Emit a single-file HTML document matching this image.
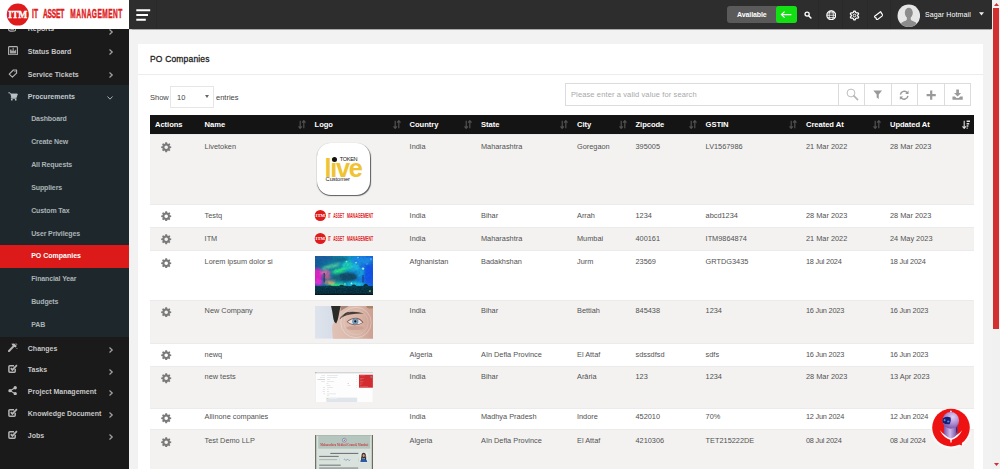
<!DOCTYPE html>
<html lang="en">
<head>
<meta charset="utf-8">
<title>PO Companies - IT Asset Management</title>
<style>
*{box-sizing:border-box;margin:0;padding:0}
html,body{width:1000px;height:469px;overflow:hidden}
body{position:relative;background:#f2f2f2;font-family:"Liberation Sans",sans-serif;font-size:7px;color:#444;line-height:1}
.abs{position:absolute}
/* header */
#logo{left:0;top:0;width:129px;height:29px;background:#fff;z-index:5}
#topbar{left:129px;top:0;width:863px;height:29.3px;background:#2d2d2d;z-index:4;box-shadow:0 0.6px 1px rgba(0,0,0,.3)}
/* sidebar */
#sidebar{left:0;top:29px;width:129px;height:440px;background:#1a1a1a;overflow:hidden}
#sidebar .grp{position:absolute;left:0;top:56px;width:129px;height:252px;background:#1e282c}
#sidebar .active{position:absolute;left:0;top:216px;width:129px;height:23px;background:#dc1a1a}
.mi{position:absolute;left:27.8px;color:#c6c6c6;font-size:7px;font-weight:bold;white-space:nowrap}
.si{position:absolute;left:31.2px;color:#aab3b7;font-size:7px;letter-spacing:-0.12px;margin-top:0.7px;white-space:nowrap;font-weight:bold}
.chev{position:absolute;left:108px;width:6px;height:8px;margin-top:0.1px}
.ico{position:absolute;left:7.9px}
.vsep{position:absolute;top:0;width:1px;height:29px;background:#292929}
#scroll{left:992px;top:0;width:8px;height:469px;background:#f1f1f1;z-index:6}
#scroll .thumb{position:absolute;left:1.4px;top:8.2px;width:5.3px;height:320.6px;background:#d32f2f}
/* card */
#card{left:138px;top:44px;width:845px;height:430px;background:#fff}
#title{left:150px;top:55.3px;font-size:8.5px;color:#222;font-weight:normal;letter-spacing:0.17px;-webkit-text-stroke:0.28px #222}
#divider{left:138px;top:74px;width:845px;height:1px;background:#ececec}
#sel{left:170px;top:86px;width:44px;height:22px;border:1px solid #e6e6e6;background:#fff}
#search{left:565px;top:83px;width:406px;height:23px;border:1px solid #dcdcdc;background:#fff}
#search .sep{position:absolute;top:0;width:1px;height:21px;background:#dcdcdc}
.lbl{font-size:7.5px;color:#444;white-space:nowrap}
/* table */
#thead{left:150px;top:115px;width:823.5px;height:19.5px;background:#141414}
.th{position:absolute;top:121.2px;color:#fff;font-weight:bold;font-size:7.6px;white-space:nowrap;letter-spacing:-0.05px}
.sort{position:absolute;top:120px;width:8px;height:9px}
.row{position:absolute;left:150px;width:823.5px;box-shadow:inset 0 1px 0 #ebebeb}
.row.g{background:#f3f2f1}
.row.w{background:#fff}
.row span{position:absolute;top:7.8px;white-space:nowrap;color:#525252;font-size:7.35px}
.row .gear{position:absolute;left:11.2px;top:6.1px;width:10.4px;height:10.4px}
</style>
</head>
<body>
<div id="sidebar" class="abs">
  <div class="grp"></div>
  <div class="active"></div>
  <!-- coordinates inside sidebar are relative to top:29 -->
  <svg class="ico" style="top:-3px;left:7.6px" width="8.4" height="6" viewBox="0 0 8.4 6"><path d="M0.6 0 V3.4 Q0.6 5.2 4.2 5.2 Q7.8 5.2 7.8 3.4 V0" fill="none" stroke="#b0b0b0" stroke-width="1.2"/><path d="M2.4 3.2 H6" stroke="#b0b0b0" stroke-width="1.2"/></svg>
  <div class="mi" style="top:-4px">Reports</div>
  <svg class="chev" style="top:-1px" viewBox="0 0 6 8"><path d="M1.5 1.5 L4.2 4 L1.5 6.5" fill="none" stroke="#a2a2a2" stroke-width="1.25"/></svg>

  <svg class="ico" style="top:16.6px;left:7.6px" width="10" height="9.4" viewBox="0 0 10 9.4"><rect x="0.6" y="0.6" width="8.8" height="8.2" rx="0.9" fill="none" stroke="#b4b4b4" stroke-width="1.1"/><path d="M1.9 7.6 V3.6 H3.5 V4.8 H4.6 V1.8 H5.7 V4.8 H7.2 V3.8 H8.1 V7.6 Z" fill="#a4a4a4"/></svg>
  <div class="mi" style="top:18.5px">Status Board</div>
  <svg class="chev" style="top:19px" viewBox="0 0 6 8"><path d="M1.5 1.5 L4.2 4 L1.5 6.5" fill="none" stroke="#a2a2a2" stroke-width="1.25"/></svg>

  <svg class="ico" style="top:40px" width="10" height="9" viewBox="0 0 10 9"><path d="M1.2 5.2 L5.4 1 H8.6 V4.2 L4.4 8.2 Z" fill="none" stroke="#b8b8b8" stroke-width="1.1" stroke-linejoin="round"/><circle cx="7" cy="2.6" r="0.6" fill="#b8b8b8"/></svg>
  <div class="mi" style="top:41.5px">Service Tickets</div>
  <svg class="chev" style="top:42px" viewBox="0 0 6 8"><path d="M1.5 1.5 L4.2 4 L1.5 6.5" fill="none" stroke="#a2a2a2" stroke-width="1.25"/></svg>

  <svg class="ico" style="top:63px;left:8px" width="10" height="9" viewBox="0 0 10 9"><path d="M0.3 0.8 H2 L2.5 2 H9.3 L8.3 5.4 H3.2 L3.5 6.3 H8.4" fill="none" stroke="#b9c1c5" stroke-width="0.9"/><path d="M2.5 2 H9.3 L8.3 5.4 H3.3 Z" fill="#b9c1c5"/><circle cx="3.8" cy="7.7" r="0.9" fill="#b9c1c5"/><circle cx="7.7" cy="7.7" r="0.9" fill="#b9c1c5"/></svg>
  <div class="mi" style="top:63.5px;color:#c3cace">Procurements</div>
  <svg class="chev" style="top:66px;left:105.8px;width:8px;height:6px" viewBox="0 0 8 6"><path d="M1.5 1.5 L4 4.2 L6.5 1.5" fill="none" stroke="#aab2b6" stroke-width="1"/></svg>

  <div class="si" style="top:85.5px">Dashboard</div>
  <div class="si" style="top:108.5px">Create New</div>
  <div class="si" style="top:131.5px">All Requests</div>
  <div class="si" style="top:154.5px">Suppliers</div>
  <div class="si" style="top:177px">Custom Tax</div>
  <div class="si" style="top:200px">User Privileges</div>
  <div class="si" style="top:222.5px;color:#fff;letter-spacing:0px">PO Companies</div>
  <div class="si" style="top:245.5px">Financial Year</div>
  <div class="si" style="top:268.5px">Budgets</div>
  <div class="si" style="top:291.5px">PAB</div>

  <svg class="ico" style="top:313.6px" width="10" height="9" viewBox="0 0 10 9"><path d="M1 8 L5.2 3.6" stroke="#b4b4b4" stroke-width="2.1" stroke-linecap="round"/><path d="M3.4 0.8 L6.2 0.6 L8.8 3 L7.6 4.6 L5.2 3.6 Z" fill="#bcbcbc"/><path d="M7.5 0.8 L9.2 1.4 M8.6 5 l0.6 0.9" stroke="#bcbcbc" stroke-width="0.8"/></svg>
  <div class="mi" style="top:315.5px">Changes</div>
  <svg class="chev" style="top:317px" viewBox="0 0 6 8"><path d="M1.5 1.5 L4.2 4 L1.5 6.5" fill="none" stroke="#a2a2a2" stroke-width="1.25"/></svg>

  <svg class="ico" style="top:335px" width="10" height="9" viewBox="0 0 10 9"><path d="M7.2 4.8 V7.3 Q7.2 8.2 6.3 8.2 H1.8 Q0.9 8.2 0.9 7.3 V2.6 Q0.9 1.7 1.8 1.7 H6" fill="none" stroke="#b4b4b4" stroke-width="1.5"/><path d="M2.8 4.2 L4.4 5.9 L8.9 1.2" fill="none" stroke="#b4b4b4" stroke-width="1.7"/></svg>
  <div class="mi" style="top:337px">Tasks</div>
  <svg class="chev" style="top:339px" viewBox="0 0 6 8"><path d="M1.5 1.5 L4.2 4 L1.5 6.5" fill="none" stroke="#a2a2a2" stroke-width="1.25"/></svg>

  <svg class="ico" style="top:356.8px" width="9.4" height="9.4" viewBox="0 0 9 9"><path d="M6.8 1.7 L2 4.5 L6.8 7.3" fill="none" stroke="#bcbcbc" stroke-width="1"/><circle cx="6.9" cy="1.7" r="1.6" fill="#bcbcbc"/><circle cx="1.9" cy="4.5" r="1.6" fill="#bcbcbc"/><circle cx="6.9" cy="7.3" r="1.6" fill="#bcbcbc"/></svg>
  <div class="mi" style="top:358.5px">Project Management</div>
  <svg class="chev" style="top:360px" viewBox="0 0 6 8"><path d="M1.5 1.5 L4.2 4 L1.5 6.5" fill="none" stroke="#a2a2a2" stroke-width="1.25"/></svg>

  <svg class="ico" style="top:378.6px" width="10" height="9" viewBox="0 0 10 9"><path d="M7.2 4.8 V7.3 Q7.2 8.2 6.3 8.2 H1.8 Q0.9 8.2 0.9 7.3 V2.6 Q0.9 1.7 1.8 1.7 H6" fill="none" stroke="#b4b4b4" stroke-width="1.5"/><path d="M2.8 4.2 L4.4 5.9 L8.9 1.2" fill="none" stroke="#b4b4b4" stroke-width="1.7"/></svg>
  <div class="mi" style="top:380.5px">Knowledge Document</div>
  <svg class="chev" style="top:382px" viewBox="0 0 6 8"><path d="M1.5 1.5 L4.2 4 L1.5 6.5" fill="none" stroke="#a2a2a2" stroke-width="1.25"/></svg>

  <svg class="ico" style="top:400.6px" width="10" height="9" viewBox="0 0 10 9"><path d="M7.2 4.8 V7.3 Q7.2 8.2 6.3 8.2 H1.8 Q0.9 8.2 0.9 7.3 V2.6 Q0.9 1.7 1.8 1.7 H6" fill="none" stroke="#b4b4b4" stroke-width="1.5"/><path d="M2.8 4.2 L4.4 5.9 L8.9 1.2" fill="none" stroke="#b4b4b4" stroke-width="1.7"/></svg>
  <div class="mi" style="top:402.5px">Jobs</div>
  <svg class="chev" style="top:404px" viewBox="0 0 6 8"><path d="M1.5 1.5 L4.2 4 L1.5 6.5" fill="none" stroke="#a2a2a2" stroke-width="1.25"/></svg>
</div>
<div id="logo" class="abs">
  <svg width="129" height="29" viewBox="0 0 129 29" style="position:absolute;left:0;top:0">
    <circle cx="17.8" cy="14.6" r="11" fill="#e01b1b"/>
    <text x="17.8" y="18" text-anchor="middle" font-family="'Liberation Serif',serif" font-weight="bold" font-size="9.5" fill="#fff" stroke="#fff" stroke-width="0.35" textLength="19" lengthAdjust="spacingAndGlyphs">ITM</text>
    <g font-family="'Liberation Sans',sans-serif" font-size="11.8" font-weight="bold" fill="#e01b1b" stroke="#e01b1b" stroke-width="0.45"><text transform="translate(32.0 18.35) scale(0.56 1.06)" textLength="10.7" lengthAdjust="spacing">IT</text><text transform="translate(43.0 18.35) scale(0.56 1.06)" textLength="38.2" lengthAdjust="spacing">ASSET</text><text transform="translate(70.3 18.35) scale(0.56 1.06)" textLength="92.7" lengthAdjust="spacing">MANAGEMENT</text></g>
  </svg>
</div>
<div id="topbar" class="abs">
  <!-- coordinates relative to left:129 -->
  <svg style="position:absolute;left:7px;top:8px" width="15" height="13" viewBox="0 0 15 13"><path d="M0.3 2.2 H14.2 M0.3 7 H12 M0.3 11.7 H9.8" stroke="#fff" stroke-width="2" fill="none"/></svg>
  <div class="vsep" style="left:27px"></div>
  <div class="vsep" style="left:689px"></div>
  <div class="vsep" style="left:713px"></div>
  <div class="vsep" style="left:738px"></div>
  <div class="vsep" style="left:761px"></div>
  <div class="abs" style="left:598px;top:6px;width:70px;height:17px;background:#5a5a5a;border-radius:3px"></div>
  <div class="abs" style="left:647px;top:6px;width:21px;height:17px;background:#12e012;border-radius:3px"></div>
  <div class="abs" style="left:608px;top:11px;color:#fff;font-size:7px;font-weight:bold;letter-spacing:-0.1px">Available</div>
  <svg style="position:absolute;left:651px;top:10px" width="13" height="9" viewBox="0 0 13 9"><path d="M11.4 4.6 H1.6 M4.6 1.6 L1.4 4.6 L4.6 7.6" stroke="#fff" stroke-width="1.15" fill="none"/></svg>
  <!-- search -->
  <svg style="position:absolute;left:675px;top:11.2px" width="7.8" height="7.8" viewBox="0 0 9 9"><circle cx="3.6" cy="3.6" r="2.4" fill="none" stroke="#fff" stroke-width="1.5"/><path d="M5.4 5.4 L8 8" stroke="#fff" stroke-width="1.7" stroke-linecap="round"/></svg>
  <!-- globe -->
  <svg style="position:absolute;left:696.6px;top:9.8px" width="10.5" height="10.5" viewBox="0 0 11 11"><circle cx="5.5" cy="5.5" r="4.6" fill="none" stroke="#fff" stroke-width="1.3"/><ellipse cx="5.5" cy="5.5" rx="2.2" ry="4.6" fill="none" stroke="#fff" stroke-width="0.85"/><path d="M1 5.5 H10 M1.6 3 H9.4 M1.6 8 H9.4" stroke="#fff" stroke-width="0.85" fill="none"/></svg>
  <!-- gear -->
  <svg style="position:absolute;left:720.2px;top:9.5px" width="11" height="11" viewBox="0 0 11 11"><path d="M4.91 1.04 L6.09 1.04 L6.72 2.54 L7.45 2.96 L9.07 2.76 L9.66 3.78 L8.67 5.08 L8.67 5.92 L9.66 7.22 L9.07 8.24 L7.45 8.04 L6.72 8.46 L6.09 9.96 L4.91 9.96 L4.28 8.46 L3.55 8.04 L1.93 8.24 L1.34 7.22 L2.33 5.92 L2.33 5.08 L1.34 3.78 L1.93 2.76 L3.55 2.96 L4.28 2.54 Z" fill="none" stroke="#fff" stroke-width="1.25" stroke-linejoin="round"/><circle cx="5.5" cy="5.5" r="1.35" fill="none" stroke="#fff" stroke-width="0.95"/></svg>
  <!-- ticket -->
  <svg style="position:absolute;left:744.7px;top:10.5px" width="9.6" height="9.6" viewBox="0 0 11 11"><g transform="rotate(-38 5.5 5.5)"><path d="M1 3 H10 V4.6 Q8.9 5.5 10 6.4 V8 H1 V6.4 Q2.1 5.5 1 4.6 Z" fill="none" stroke="#fff" stroke-width="1.35" stroke-linejoin="round"/></g></svg>
  <!-- avatar -->
  <svg style="position:absolute;left:767.8px;top:4.4px" width="23.6" height="23.6" viewBox="0 0 23 23"><defs><clipPath id="avc"><circle cx="11.5" cy="11.5" r="11"/></clipPath></defs><circle cx="11.5" cy="11.5" r="11" fill="#e6e6e6"/><g clip-path="url(#avc)" fill="#8c8c8c"><ellipse cx="11.5" cy="8.6" rx="3.9" ry="4.9"/><path d="M9.6 12 H13.4 V15 Q13.6 16 16 16.8 Q19 17.8 19.4 20 L19.6 24 H3.4 L3.6 20 Q4 17.8 7 16.8 Q9.4 16 9.6 15 Z"/></g></svg>
  <div class="abs" style="left:796px;top:11px;color:#fff;font-size:7px;letter-spacing:0.12px">Sagar Hotmail</div>
  <svg style="position:absolute;left:850px;top:12px" width="5" height="4" viewBox="0 0 5 4"><path d="M0 0.3 H5 L2.5 3.6 Z" fill="#eee"/></svg>
</div>
<div id="scroll" class="abs">
  <div class="thumb"></div>
  <svg style="position:absolute;left:1.5px;top:3px" width="5" height="3" viewBox="0 0 5 3"><path d="M0 3 L2.5 0 L5 3 Z" fill="#d32f2f"/></svg>
  <svg style="position:absolute;left:1.5px;top:463px" width="5" height="3" viewBox="0 0 5 3"><path d="M0 0 L2.5 3 L5 0 Z" fill="#d32f2f"/></svg>
</div>
<div id="card" class="abs"></div>
<div id="title" class="abs">PO Companies</div>
<div id="divider" class="abs"></div>
<div class="abs lbl" style="left:150px;top:93.5px">Show</div>
<div id="sel" class="abs"><span style="position:absolute;left:6px;top:6.5px;font-size:7.5px;color:#444">10</span><svg style="position:absolute;left:33.6px;top:7.6px" width="4" height="3" viewBox="0 0 4 3"><path d="M0 0 H4 L2 3 Z" fill="#666"/></svg></div>
<div class="abs lbl" style="left:216px;top:93.5px">entries</div>
<div id="search" class="abs">
  <span style="position:absolute;left:5px;top:7.3px;font-size:7.5px;color:#a9a9a9;white-space:nowrap;letter-spacing:0.12px">Please enter a valid value for search</span>
  <div class="sep" style="left:271.8px"></div><div class="sep" style="left:298.2px"></div><div class="sep" style="left:324.9px"></div><div class="sep" style="left:351.4px"></div><div class="sep" style="left:377.6px"></div>
  <svg style="position:absolute;left:280px;top:4px" width="13" height="13" viewBox="0 0 13 13"><circle cx="5" cy="5" r="3.9" fill="none" stroke="#b5b5b5" stroke-width="0.9"/><path d="M7.9 7.9 L11.6 11.6" stroke="#b5b5b5" stroke-width="1.6" stroke-linecap="round"/></svg>
  <svg style="position:absolute;left:307.2px;top:6.3px" width="9.4" height="9.4" viewBox="0 0 9 9"><path d="M0.3 0.5 H8.7 L5.5 4.2 V8.6 L3.5 7.2 V4.2 Z" fill="#9a9a9a"/></svg>
  <svg style="position:absolute;left:333px;top:5.8px" width="10.4" height="10.4" viewBox="0 0 10 10"><path d="M1.4 4.4 A3.7 3.7 0 0 1 8 2.6 M8.6 5.6 A3.7 3.7 0 0 1 2 7.4" fill="none" stroke="#9a9a9a" stroke-width="1.4"/><path d="M9.2 0.6 V3.8 H6 Z M0.8 9.4 V6.2 H4 Z" fill="#9a9a9a"/></svg>
  <svg style="position:absolute;left:359.6px;top:5.8px" width="10.4" height="10.4" viewBox="0 0 10 10"><path d="M5 0.6 V9.4 M0.6 5 H9.4" stroke="#9a9a9a" stroke-width="2.1" fill="none"/></svg>
  <svg style="position:absolute;left:386px;top:5px" width="11.2" height="11.2" viewBox="0 0 10 10"><path d="M3.8 0.4 H6.2 V3.6 H8.2 L5 6.8 L1.8 3.6 H3.8 Z" fill="#9a9a9a"/><path d="M0.4 6.6 H2.6 L4 8 H6 L7.4 6.6 H9.6 V9.6 H0.4 Z" fill="#9a9a9a"/></svg>
</div>
<div id="thead" class="abs"></div>
<div class="th" style="left:155px">Actions</div>
<div class="th" style="left:204.6px">Name</div>
<svg class="sort" style="left:298px" viewBox="0 0 8 9"><path d="M2.2 8.3 V0.8 M0.5 6.4 L2.2 8.4 L3.9 6.4 M5.8 0.7 V8.2 M4.1 2.6 L5.8 0.6 L7.5 2.6" fill="none" stroke="#505050" stroke-width="1.2"/></svg>
<div class="th" style="left:314.6px">Logo</div>
<svg class="sort" style="left:392.5px" viewBox="0 0 8 9"><path d="M2.2 8.3 V0.8 M0.5 6.4 L2.2 8.4 L3.9 6.4 M5.8 0.7 V8.2 M4.1 2.6 L5.8 0.6 L7.5 2.6" fill="none" stroke="#505050" stroke-width="1.2"/></svg>
<div class="th" style="left:409.6px">Country</div>
<svg class="sort" style="left:464px" viewBox="0 0 8 9"><path d="M2.2 8.3 V0.8 M0.5 6.4 L2.2 8.4 L3.9 6.4 M5.8 0.7 V8.2 M4.1 2.6 L5.8 0.6 L7.5 2.6" fill="none" stroke="#505050" stroke-width="1.2"/></svg>
<div class="th" style="left:481px">State</div>
<svg class="sort" style="left:560px" viewBox="0 0 8 9"><path d="M2.2 8.3 V0.8 M0.5 6.4 L2.2 8.4 L3.9 6.4 M5.8 0.7 V8.2 M4.1 2.6 L5.8 0.6 L7.5 2.6" fill="none" stroke="#505050" stroke-width="1.2"/></svg>
<div class="th" style="left:577px">City</div>
<svg class="sort" style="left:618.5px" viewBox="0 0 8 9"><path d="M2.2 8.3 V0.8 M0.5 6.4 L2.2 8.4 L3.9 6.4 M5.8 0.7 V8.2 M4.1 2.6 L5.8 0.6 L7.5 2.6" fill="none" stroke="#505050" stroke-width="1.2"/></svg>
<div class="th" style="left:635.5px">Zipcode</div>
<svg class="sort" style="left:688.5px" viewBox="0 0 8 9"><path d="M2.2 8.3 V0.8 M0.5 6.4 L2.2 8.4 L3.9 6.4 M5.8 0.7 V8.2 M4.1 2.6 L5.8 0.6 L7.5 2.6" fill="none" stroke="#505050" stroke-width="1.2"/></svg>
<div class="th" style="left:705.6px">GSTIN</div>
<svg class="sort" style="left:789px" viewBox="0 0 8 9"><path d="M2.2 8.3 V0.8 M0.5 6.4 L2.2 8.4 L3.9 6.4 M5.8 0.7 V8.2 M4.1 2.6 L5.8 0.6 L7.5 2.6" fill="none" stroke="#505050" stroke-width="1.2"/></svg>
<div class="th" style="left:806px">Created At</div>
<svg class="sort" style="left:873px" viewBox="0 0 8 9"><path d="M2.2 8.3 V0.8 M0.5 6.4 L2.2 8.4 L3.9 6.4 M5.8 0.7 V8.2 M4.1 2.6 L5.8 0.6 L7.5 2.6" fill="none" stroke="#505050" stroke-width="1.2"/></svg>
<div class="th" style="left:890px">Updated At</div>
<svg class="sort" style="left:961.6px" viewBox="0 0 8 9"><path d="M2.2 8.3 V0.8 M0.5 6.4 L2.2 8.4 L3.9 6.4" fill="none" stroke="#ddd" stroke-width="1.1"/><path d="M4.6 0.5 H8 V2 H4.6 Z M4.6 2.9 H7.2 V4.4 H4.6 Z M4.6 5.3 H6.4 V6.8 H4.6 Z M4.6 7.6 H5.7 V8.8 H4.6 Z" fill="#ddd"/></svg>
<div class="row g" id="r1" style="top:134px;height:70px"><svg class="gear" style="top:8.3px" viewBox="0 0 11 11"><path d="M4.6 0.3 H6.4 L6.7 1.7 L7.6 2.1 L8.8 1.3 L9.9 2.5 L9.1 3.6 L9.4 4.5 L10.8 4.7 V6.4 L9.4 6.7 L9.1 7.5 L9.9 8.6 L8.7 9.8 L7.6 9 L6.7 9.4 L6.4 10.8 H4.6 L4.3 9.4 L3.4 9 L2.3 9.8 L1.1 8.6 L1.9 7.5 L1.6 6.7 L0.2 6.4 V4.7 L1.6 4.5 L1.9 3.6 L1.1 2.5 L2.3 1.3 L3.4 2.1 L4.3 1.7 Z M5.5 3.6 A1.9 1.9 0 1 0 5.5 7.4 A1.9 1.9 0 1 0 5.5 3.6 Z" fill="#7a7a7a" fill-rule="evenodd"/></svg><span style="top:9.4px;left:54.6px">Livetoken</span><span style="top:9.4px;left:259.6px">India</span><span style="top:9.4px;left:331.0px">Maharashtra</span><span style="top:9.4px;left:427.0px">Goregaon</span><span style="top:9.4px;left:485.5px">395005</span><span style="top:9.4px;left:555.6px">LV1567986</span><span style="top:9.4px;left:656.0px">21 Mar 2022</span><span style="top:9.4px;left:740.0px">28 Mar 2023</span></div>
<div class="row w" id="r2" style="top:204px;height:23px"><svg class="gear" style="top:6.9px" viewBox="0 0 11 11"><path d="M4.6 0.3 H6.4 L6.7 1.7 L7.6 2.1 L8.8 1.3 L9.9 2.5 L9.1 3.6 L9.4 4.5 L10.8 4.7 V6.4 L9.4 6.7 L9.1 7.5 L9.9 8.6 L8.7 9.8 L7.6 9 L6.7 9.4 L6.4 10.8 H4.6 L4.3 9.4 L3.4 9 L2.3 9.8 L1.1 8.6 L1.9 7.5 L1.6 6.7 L0.2 6.4 V4.7 L1.6 4.5 L1.9 3.6 L1.1 2.5 L2.3 1.3 L3.4 2.1 L4.3 1.7 Z M5.5 3.6 A1.9 1.9 0 1 0 5.5 7.4 A1.9 1.9 0 1 0 5.5 3.6 Z" fill="#7a7a7a" fill-rule="evenodd"/></svg><span style="top:8.2px;left:54.6px">Testq</span><span style="top:8.2px;left:259.6px">India</span><span style="top:8.2px;left:331.0px">Bihar</span><span style="top:8.2px;left:427.0px">Arrah</span><span style="top:8.2px;left:485.5px">1234</span><span style="top:8.2px;left:555.6px">abcd1234</span><span style="top:8.2px;left:656.0px">28 Mar 2023</span><span style="top:8.2px;left:740.0px">28 Mar 2023</span></div>
<div class="row g" id="r3" style="top:227px;height:23px"><svg class="gear" style="top:7.2px" viewBox="0 0 11 11"><path d="M4.6 0.3 H6.4 L6.7 1.7 L7.6 2.1 L8.8 1.3 L9.9 2.5 L9.1 3.6 L9.4 4.5 L10.8 4.7 V6.4 L9.4 6.7 L9.1 7.5 L9.9 8.6 L8.7 9.8 L7.6 9 L6.7 9.4 L6.4 10.8 H4.6 L4.3 9.4 L3.4 9 L2.3 9.8 L1.1 8.6 L1.9 7.5 L1.6 6.7 L0.2 6.4 V4.7 L1.6 4.5 L1.9 3.6 L1.1 2.5 L2.3 1.3 L3.4 2.1 L4.3 1.7 Z M5.5 3.6 A1.9 1.9 0 1 0 5.5 7.4 A1.9 1.9 0 1 0 5.5 3.6 Z" fill="#7a7a7a" fill-rule="evenodd"/></svg><span style="top:8.0px;left:54.6px">ITM</span><span style="top:8.0px;left:259.6px">India</span><span style="top:8.0px;left:331.0px">Maharashtra</span><span style="top:8.0px;left:427.0px">Mumbai</span><span style="top:8.0px;left:485.5px">400161</span><span style="top:8.0px;left:555.6px">ITM9864874</span><span style="top:8.0px;left:656.0px">21 Mar 2022</span><span style="top:8.0px;left:740.0px">24 May 2023</span></div>
<div class="row w" id="r4" style="top:250px;height:50px"><svg class="gear" style="top:7.6px" viewBox="0 0 11 11"><path d="M4.6 0.3 H6.4 L6.7 1.7 L7.6 2.1 L8.8 1.3 L9.9 2.5 L9.1 3.6 L9.4 4.5 L10.8 4.7 V6.4 L9.4 6.7 L9.1 7.5 L9.9 8.6 L8.7 9.8 L7.6 9 L6.7 9.4 L6.4 10.8 H4.6 L4.3 9.4 L3.4 9 L2.3 9.8 L1.1 8.6 L1.9 7.5 L1.6 6.7 L0.2 6.4 V4.7 L1.6 4.5 L1.9 3.6 L1.1 2.5 L2.3 1.3 L3.4 2.1 L4.3 1.7 Z M5.5 3.6 A1.9 1.9 0 1 0 5.5 7.4 A1.9 1.9 0 1 0 5.5 3.6 Z" fill="#7a7a7a" fill-rule="evenodd"/></svg><span style="top:8.0px;left:54.6px">Lorem ipsum dolor si</span><span style="top:8.0px;left:259.6px">Afghanistan</span><span style="top:8.0px;left:331.0px">Badakhshan</span><span style="top:8.0px;left:427.0px">Jurm</span><span style="top:8.0px;left:485.5px">23569</span><span style="top:8.0px;left:555.6px">GRTDG3435</span><span style="top:8.0px;left:656.0px;letter-spacing:-0.22px">18 Jul 2024</span><span style="top:8.0px;left:740.0px;letter-spacing:-0.22px">18 Jul 2024</span></div>
<div class="row g" id="r5" style="top:300px;height:43px"><svg class="gear" style="top:6.8px" viewBox="0 0 11 11"><path d="M4.6 0.3 H6.4 L6.7 1.7 L7.6 2.1 L8.8 1.3 L9.9 2.5 L9.1 3.6 L9.4 4.5 L10.8 4.7 V6.4 L9.4 6.7 L9.1 7.5 L9.9 8.6 L8.7 9.8 L7.6 9 L6.7 9.4 L6.4 10.8 H4.6 L4.3 9.4 L3.4 9 L2.3 9.8 L1.1 8.6 L1.9 7.5 L1.6 6.7 L0.2 6.4 V4.7 L1.6 4.5 L1.9 3.6 L1.1 2.5 L2.3 1.3 L3.4 2.1 L4.3 1.7 Z M5.5 3.6 A1.9 1.9 0 1 0 5.5 7.4 A1.9 1.9 0 1 0 5.5 3.6 Z" fill="#7a7a7a" fill-rule="evenodd"/></svg><span style="top:7.4px;left:54.6px">New Company</span><span style="top:7.4px;left:259.6px">India</span><span style="top:7.4px;left:331.0px">Bihar</span><span style="top:7.4px;left:427.0px">Bettiah</span><span style="top:7.4px;left:485.5px">845438</span><span style="top:7.4px;left:555.6px">1234</span><span style="top:7.4px;left:656.0px;letter-spacing:-0.22px">16 Jun 2023</span><span style="top:7.4px;left:740.0px;letter-spacing:-0.22px">16 Jun 2023</span></div>
<div class="row w" id="r6" style="top:343px;height:23px"><svg class="gear" style="top:6.8px" viewBox="0 0 11 11"><path d="M4.6 0.3 H6.4 L6.7 1.7 L7.6 2.1 L8.8 1.3 L9.9 2.5 L9.1 3.6 L9.4 4.5 L10.8 4.7 V6.4 L9.4 6.7 L9.1 7.5 L9.9 8.6 L8.7 9.8 L7.6 9 L6.7 9.4 L6.4 10.8 H4.6 L4.3 9.4 L3.4 9 L2.3 9.8 L1.1 8.6 L1.9 7.5 L1.6 6.7 L0.2 6.4 V4.7 L1.6 4.5 L1.9 3.6 L1.1 2.5 L2.3 1.3 L3.4 2.1 L4.3 1.7 Z M5.5 3.6 A1.9 1.9 0 1 0 5.5 7.4 A1.9 1.9 0 1 0 5.5 3.6 Z" fill="#7a7a7a" fill-rule="evenodd"/></svg><span style="top:8.2px;left:54.6px">newq</span><span style="top:8.2px;left:259.6px">Algeria</span><span style="top:8.2px;left:331.0px">Aïn Defla Province</span><span style="top:8.2px;left:427.0px">El Attaf</span><span style="top:8.2px;left:485.5px">sdssdfsd</span><span style="top:8.2px;left:555.6px">sdfs</span><span style="top:8.2px;left:656.0px;letter-spacing:-0.22px">16 Jun 2023</span><span style="top:8.2px;left:740.0px;letter-spacing:-0.22px">16 Jun 2023</span></div>
<div class="row g" id="r7" style="top:366px;height:42px"><svg class="gear" style="top:7.3px" viewBox="0 0 11 11"><path d="M4.6 0.3 H6.4 L6.7 1.7 L7.6 2.1 L8.8 1.3 L9.9 2.5 L9.1 3.6 L9.4 4.5 L10.8 4.7 V6.4 L9.4 6.7 L9.1 7.5 L9.9 8.6 L8.7 9.8 L7.6 9 L6.7 9.4 L6.4 10.8 H4.6 L4.3 9.4 L3.4 9 L2.3 9.8 L1.1 8.6 L1.9 7.5 L1.6 6.7 L0.2 6.4 V4.7 L1.6 4.5 L1.9 3.6 L1.1 2.5 L2.3 1.3 L3.4 2.1 L4.3 1.7 Z M5.5 3.6 A1.9 1.9 0 1 0 5.5 7.4 A1.9 1.9 0 1 0 5.5 3.6 Z" fill="#7a7a7a" fill-rule="evenodd"/></svg><span style="top:7.3px;left:54.6px">new tests</span><span style="top:7.3px;left:259.6px">India</span><span style="top:7.3px;left:331.0px">Bihar</span><span style="top:7.3px;left:427.0px">Arāria</span><span style="top:7.3px;left:485.5px">123</span><span style="top:7.3px;left:555.6px">1234</span><span style="top:7.3px;left:656.0px">28 Mar 2023</span><span style="top:7.3px;left:740.0px">13 Apr 2023</span></div>
<div class="row w" id="r8" style="top:408px;height:21px"><svg class="gear" style="top:5.3px" viewBox="0 0 11 11"><path d="M4.6 0.3 H6.4 L6.7 1.7 L7.6 2.1 L8.8 1.3 L9.9 2.5 L9.1 3.6 L9.4 4.5 L10.8 4.7 V6.4 L9.4 6.7 L9.1 7.5 L9.9 8.6 L8.7 9.8 L7.6 9 L6.7 9.4 L6.4 10.8 H4.6 L4.3 9.4 L3.4 9 L2.3 9.8 L1.1 8.6 L1.9 7.5 L1.6 6.7 L0.2 6.4 V4.7 L1.6 4.5 L1.9 3.6 L1.1 2.5 L2.3 1.3 L3.4 2.1 L4.3 1.7 Z M5.5 3.6 A1.9 1.9 0 1 0 5.5 7.4 A1.9 1.9 0 1 0 5.5 3.6 Z" fill="#7a7a7a" fill-rule="evenodd"/></svg><span style="top:5.2px;left:54.6px">Allinone companies</span><span style="top:5.2px;left:259.6px">India</span><span style="top:5.2px;left:331.0px">Madhya Pradesh</span><span style="top:5.2px;left:427.0px">Indore</span><span style="top:5.2px;left:485.5px">452010</span><span style="top:5.2px;left:555.6px">70%</span><span style="top:5.2px;left:656.0px;letter-spacing:-0.22px">12 Jun 2024</span><span style="top:5.2px;left:740.0px;letter-spacing:-0.22px">12 Jun 2024</span></div>
<div class="row g" id="r9" style="top:429px;height:45px"><svg class="gear" style="top:7.7px" viewBox="0 0 11 11"><path d="M4.6 0.3 H6.4 L6.7 1.7 L7.6 2.1 L8.8 1.3 L9.9 2.5 L9.1 3.6 L9.4 4.5 L10.8 4.7 V6.4 L9.4 6.7 L9.1 7.5 L9.9 8.6 L8.7 9.8 L7.6 9 L6.7 9.4 L6.4 10.8 H4.6 L4.3 9.4 L3.4 9 L2.3 9.8 L1.1 8.6 L1.9 7.5 L1.6 6.7 L0.2 6.4 V4.7 L1.6 4.5 L1.9 3.6 L1.1 2.5 L2.3 1.3 L3.4 2.1 L4.3 1.7 Z M5.5 3.6 A1.9 1.9 0 1 0 5.5 7.4 A1.9 1.9 0 1 0 5.5 3.6 Z" fill="#7a7a7a" fill-rule="evenodd"/></svg><span style="top:8.0px;left:54.6px">Test Demo LLP</span><span style="top:8.0px;left:259.6px">Algeria</span><span style="top:8.0px;left:331.0px">Aïn Defla Province</span><span style="top:8.0px;left:427.0px">El Attaf</span><span style="top:8.0px;left:485.5px">4210306</span><span style="top:8.0px;left:555.6px">TET215222DE</span><span style="top:8.0px;left:656.0px;letter-spacing:-0.22px">08 Jul 2024</span><span style="top:8.0px;left:740.0px;letter-spacing:-0.22px">08 Jul 2024</span></div>

<!-- logos / thumbnails -->
<div class="abs" style="left:316.8px;top:143.4px;width:53.2px;height:52px;background:#fff;border-radius:14px;box-shadow:0.8px 1px 1px rgba(30,30,30,.7), 0 0 1px rgba(0,0,0,.2)"></div>
<div class="abs" style="left:324.6px;top:156.1px;font-size:25.3px;font-weight:bold;color:#f0c330;letter-spacing:-1.3px;line-height:1;font-family:'Liberation Sans',sans-serif">live</div>
<div class="abs" style="left:332.4px;top:156.6px;width:5px;height:5px;border-radius:50%;background:#111"></div>
<div class="abs" style="left:339.8px;top:156.8px;font-size:5.6px;color:#222;letter-spacing:-0.35px">TOKEN</div>
<div class="abs" style="left:325.6px;top:177.3px;font-size:5.8px;color:#222;letter-spacing:-0.1px">Customer</div>
<svg class="abs" style="left:313px;top:208.7px" width="62" height="13" viewBox="0 0 62 13"><circle cx="7.3" cy="6.5" r="5.6" fill="#e01b1b"/><text x="7.3" y="8.3" text-anchor="middle" font-family="'Liberation Serif',serif" font-weight="bold" font-size="5" fill="#fff" textLength="9.4" lengthAdjust="spacingAndGlyphs">ITM</text><g font-family="'Liberation Sans',sans-serif" font-size="6.6" fill="#e01b1b" font-weight="bold"><text x="15" y="8.8" textLength="2.8" lengthAdjust="spacingAndGlyphs">IT</text><text x="20.2" y="8.8" textLength="11" lengthAdjust="spacingAndGlyphs">ASSET</text><text x="34" y="8.8" textLength="26.2" lengthAdjust="spacingAndGlyphs">MANAGEMENT</text></g></svg>
<svg class="abs" style="left:313px;top:231.5px" width="62" height="13" viewBox="0 0 62 13"><circle cx="7.3" cy="6.5" r="5.6" fill="#e01b1b"/><text x="7.3" y="8.3" text-anchor="middle" font-family="'Liberation Serif',serif" font-weight="bold" font-size="5" fill="#fff" textLength="9.4" lengthAdjust="spacingAndGlyphs">ITM</text><g font-family="'Liberation Sans',sans-serif" font-size="6.6" fill="#e01b1b" font-weight="bold"><text x="15" y="8.8" textLength="2.8" lengthAdjust="spacingAndGlyphs">IT</text><text x="20.2" y="8.8" textLength="11" lengthAdjust="spacingAndGlyphs">ASSET</text><text x="34" y="8.8" textLength="26.2" lengthAdjust="spacingAndGlyphs">MANAGEMENT</text></g></svg>
<svg class="abs" style="left:314.8px;top:255.9px" width="58.7" height="39.6" viewBox="0 0 58.7 39.6">
<defs>
<linearGradient id="cbg" x1="0" y1="0" x2="1" y2="0"><stop offset="0" stop-color="#0e5698"/><stop offset="0.3" stop-color="#0a789c"/><stop offset="0.6" stop-color="#0c98c8"/><stop offset="0.8" stop-color="#1070e0"/><stop offset="1" stop-color="#1060e8"/></linearGradient>
<filter id="b1" x="-30%" y="-30%" width="160%" height="160%"><feGaussianBlur stdDeviation="1.15"/></filter>
<filter id="b2" x="-30%" y="-30%" width="160%" height="160%"><feGaussianBlur stdDeviation="0.55"/></filter>
<filter id="cn" x="0" y="0" width="100%" height="100%"><feTurbulence type="fractalNoise" baseFrequency="0.55" numOctaves="2" seed="7" result="t"/><feColorMatrix type="matrix" values="0 0 0 0 1  0 0 0 0 1  0 0 0 0 1  1.6 0 0 0 -0.55"/></filter>
<filter id="cn2" x="0" y="0" width="100%" height="100%"><feTurbulence type="fractalNoise" baseFrequency="0.7" numOctaves="2" seed="3" result="t"/><feColorMatrix type="matrix" values="0 0 0 0 0  0 0 0 0 0.08  0 0 0 0 0.14  0 1.7 0 0 -0.6"/></filter>
<filter id="cn3" x="0" y="0" width="100%" height="100%"><feTurbulence type="fractalNoise" baseFrequency="0.5" numOctaves="2" seed="11"/><feColorMatrix type="matrix" values="0 0 0 0 0.02  0 0 0 0 0.12  0 0 0 0 0.25  0 0 1.8 0 -0.75"/></filter>
<clipPath id="cc"><rect width="58.7" height="39.6"/></clipPath>
</defs>
<g clip-path="url(#cc)">
<rect width="58.7" height="39.6" fill="url(#cbg)"/>
<g filter="url(#b1)">
<ellipse cx="8" cy="2.4" rx="10" ry="2.6" fill="#13589c"/>
<ellipse cx="25" cy="3.4" rx="8" ry="2.2" fill="#0c6688"/>
<ellipse cx="47" cy="4.5" rx="11" ry="3.6" fill="#1488e8"/>
<ellipse cx="2.6" cy="20" rx="4.6" ry="8" fill="#e41ec4"/>
<ellipse cx="3.4" cy="26.6" rx="4.4" ry="2.6" fill="#f02adc"/>
<ellipse cx="10.5" cy="16.4" rx="5" ry="2.2" fill="#dc68a8"/>
<ellipse cx="12" cy="21" rx="3.4" ry="2.4" fill="#c45c8c"/>
<ellipse cx="14.5" cy="26.4" rx="5.4" ry="1.7" fill="#e89c64"/>
<ellipse cx="16" cy="10.4" rx="10" ry="1.7" fill="#50d09c" transform="rotate(-14 16 10.4)"/>
<ellipse cx="24.5" cy="14.6" rx="7.6" ry="2.1" fill="#24ec80" transform="rotate(-14 24.5 14.6)"/>
<ellipse cx="22" cy="29" rx="8.4" ry="1.7" fill="#2ce878"/>
<ellipse cx="33" cy="9.6" rx="5.6" ry="4" fill="#14d0b8"/>
<ellipse cx="40.5" cy="11" rx="4" ry="3.4" fill="#14b8e0"/>
<ellipse cx="41" cy="28.2" rx="8.6" ry="2" fill="#14ccdc"/>
<ellipse cx="32" cy="21" rx="10.5" ry="4.6" fill="#0d4464"/>
<ellipse cx="21.4" cy="21.6" rx="4.4" ry="3" fill="#166070"/>
<ellipse cx="46" cy="17" rx="3.6" ry="4.4" fill="#0ea0dc"/>
<ellipse cx="54.4" cy="18" rx="5.6" ry="10" fill="#0e50ec"/>
</g>
<g filter="url(#b2)">
<circle cx="48" cy="12.6" r="1.2" fill="#a8ecff"/>
<circle cx="41" cy="6.6" r="0.9" fill="#84e4f4"/>
<circle cx="31.6" cy="5.6" r="0.9" fill="#84f4dc"/>
<circle cx="43" cy="1.6" r="0.8" fill="#74d4fc"/>
<circle cx="56" cy="3" r="0.9" fill="#60b4ff"/>
<circle cx="52" cy="8" r="0.7" fill="#58b8ff"/>
<circle cx="30" cy="28" r="0.8" fill="#a0ffd8"/>
<circle cx="36.5" cy="27.4" r="0.8" fill="#a0f4ff"/>
<rect x="8.6" y="17" width="1.2" height="9.6" fill="#3a2a54"/>
<rect x="47.4" y="19" width="1.3" height="7.4" fill="#123c90"/>
</g>
<rect width="58.7" height="30.4" filter="url(#cn)" opacity="0.07"/><rect width="58.7" height="30.4" filter="url(#cn3)" opacity="0.5"/>
<rect x="0" y="30.2" width="58.7" height="9.4" fill="#0b2834"/>
<g filter="url(#b2)">
<path d="M0 30.8 Q3 29.4 6 30.5 T12 30.2 T18 30.7 T24 30 T30 30.7 T36 30.2 T42 30.7 T48 30 T54 30.6 T58.7 30.2 V32.4 H0 Z" fill="#0d3240"/>
<circle cx="55" cy="35.2" r="1.1" fill="#7a9a58"/>
</g>
<rect x="0" y="31" width="58.7" height="7" filter="url(#cn2)" opacity="0.9"/>
<rect x="0" y="37.8" width="58.7" height="1.8" fill="#08161e"/>
</g></svg>
<svg class="abs" style="left:314.8px;top:305.9px" width="58.3" height="32.8" viewBox="0 0 58.3 32.8">
<defs>
<linearGradient id="ebg" x1="0" y1="0" x2="1" y2="0"><stop offset="0" stop-color="#dfe4ec"/><stop offset="0.5" stop-color="#d0d9e6"/><stop offset="1" stop-color="#dde3ec"/></linearGradient>
<linearGradient id="skin" x1="0" y1="0" x2="1" y2="0"><stop offset="0" stop-color="#e0c2b6"/><stop offset="0.55" stop-color="#d8b6a8"/><stop offset="0.85" stop-color="#cc9e90"/><stop offset="1" stop-color="#b87868"/></linearGradient>
<filter id="eb" x="-30%" y="-30%" width="160%" height="160%"><feGaussianBlur stdDeviation="0.7"/></filter>
<filter id="eb2" x="-30%" y="-30%" width="160%" height="160%"><feGaussianBlur stdDeviation="0.35"/></filter>
<clipPath id="ec"><rect width="58.3" height="32.8"/></clipPath>
</defs>
<g clip-path="url(#ec)">
<rect width="58.3" height="32.8" fill="url(#ebg)"/>
<g filter="url(#eb)">
<path d="M21 -8 H66 V42 H22 Q17 34 17.2 24 Q16.6 18 19.5 16.5 Z" fill="url(#skin)"/>
<path d="M14 -8 H28 Q24.6 3 23.6 10 Q22.8 15 21.2 17.5 Q19 16.5 18.4 13 Q17.4 4 14 -8 Z" fill="#2b2a28"/>
<path d="M27 -6 H42 Q33 1 25.5 5 Z" fill="#7a5a4c" opacity="0.55"/>
<path d="M24.5 13.5 Q27 7.5 33 6 Q41 4.8 49 7.6 Q42 7.4 35 8.6 Q28.5 9.8 24.5 13.5 Z" fill="#4a3a34"/>
<ellipse cx="40" cy="22" rx="9" ry="2" fill="#c99a8c" opacity="0.7"/>
<ellipse cx="55.5" cy="0.6" rx="4" ry="2" fill="#a8846a"/>
</g>
<g filter="url(#eb2)">
<path d="M31.5 15.8 Q36 11.6 41.5 11.8 Q46 12.4 48.5 16.6 Q44 19.6 39 19.2 Q34.5 18.6 31.5 15.8 Z" fill="#8a5a50"/>
<path d="M32.6 15.8 Q36.5 12.6 41.2 12.8 Q45.2 13.3 47.4 16.4 Q43.6 18.7 39.2 18.3 Q35.2 17.9 32.6 15.8 Z" fill="#e8e4e4"/>
<circle cx="40.3" cy="15.4" r="3.1" fill="#6890b4"/>
<circle cx="40.3" cy="15.4" r="2" fill="#86aac8"/>
<circle cx="40.3" cy="15.4" r="1.15" fill="#101014"/>
</g>
<circle cx="41" cy="16.5" r="15.2" fill="none" stroke="#fff" stroke-width="0.45" opacity="0.7"/>
<circle cx="41" cy="16.5" r="12.2" fill="none" stroke="#fff" stroke-width="0.35" opacity="0.45"/>
</g></svg>
<svg class="abs" style="left:314.8px;top:371.7px" width="58.4" height="30.2" viewBox="0 0 58.4 30.2">
<rect width="58.4" height="30.2" fill="#fdfdfd"/>
<rect width="58.4" height="1.4" fill="#d4d7da"/>
<rect x="0" y="0" width="0.6" height="30.2" fill="#e4e6e8"/><rect x="57.8" y="0" width="0.6" height="30.2" fill="#e4e6e8"/>
<rect x="0.3" y="0.2" width="1" height="1" fill="#9aa0a6"/>
<g fill="#d9dadc">
<rect x="6.5" y="3.2" width="3.5" height="0.6"/><rect x="12" y="3.2" width="11" height="0.6"/>
<rect x="5" y="5.2" width="5" height="0.6"/><rect x="12" y="5.2" width="10" height="0.6"/>
<rect x="2.5" y="7.3" width="7.5" height="0.7" fill="#c4c6c8"/><rect x="12" y="7.3" width="3" height="0.6"/>
<rect x="6" y="9.3" width="4" height="0.6"/><rect x="12" y="9.3" width="7" height="0.6"/>
<rect x="11.5" y="11.4" width="2" height="0.6"/><rect x="11.5" y="13.2" width="4" height="0.6"/><rect x="32.5" y="13.2" width="3" height="0.6"/>
<rect x="8" y="15.4" width="2" height="0.6"/><rect x="12" y="15.4" width="6" height="0.6"/>
<rect x="8" y="17.4" width="2" height="0.6"/><rect x="12" y="17.4" width="1.5" height="0.6"/>
<rect x="7.5" y="19.4" width="2.5" height="0.6"/><rect x="12" y="19.4" width="2" height="0.6"/>
<rect x="8.5" y="21.6" width="1.5" height="0.6" fill="#e8c4c4"/><rect x="12" y="21.6" width="9" height="0.6"/>
<rect x="12" y="23.4" width="2" height="0.6"/>
<rect x="41" y="3.2" width="0.8" height="0.6"/><rect x="41" y="5.2" width="0.8" height="0.6"/><rect x="41" y="7.3" width="0.8" height="0.6"/><rect x="41" y="9.3" width="0.8" height="0.6"/><rect x="41" y="13.2" width="0.8" height="0.6"/><rect x="41" y="15.4" width="0.8" height="0.6"/>
</g>
<rect x="32.5" y="11.2" width="1.5" height="0.6" fill="#f0b0b0"/>
<rect x="44" y="2.7" width="13.9" height="13" fill="#d32c30"/>
<rect x="55.5" y="4.2" width="1.6" height="1.6" fill="#8a8a8a"/>
<g fill="#e46a6c"><rect x="45" y="3.6" width="5" height="0.5"/><rect x="45" y="6" width="4" height="0.5"/><rect x="45" y="7.6" width="2" height="0.5"/><rect x="45" y="9.2" width="3.5" height="0.5"/><rect x="45" y="10.8" width="2.5" height="0.5"/><rect x="45" y="12.4" width="1.5" height="0.5"/><rect x="45" y="14" width="8" height="0.5"/></g>
<rect x="11.3" y="25.6" width="30.9" height="4.6" fill="#dfe5ea"/>
<rect x="11.6" y="26.2" width="1.2" height="0.8" fill="#e8d870"/><rect x="14" y="26.3" width="8" height="0.7" fill="#eef2f5"/>
</svg>
<svg class="abs" style="left:315px;top:435px" width="58.2" height="34" viewBox="0 0 58.2 34">
<defs><filter id="cb" x="-20%" y="-20%" width="140%" height="140%"><feGaussianBlur stdDeviation="0.3"/></filter></defs>
<rect width="58.6" height="34" fill="#d9e2dc"/>
<rect x="0" y="0" width="58.6" height="0.9" fill="#a8b5a8"/>
<rect x="0" y="0" width="1" height="34" fill="#6f7362"/><rect x="1" y="0" width="0.8" height="34" fill="#b5c0b4"/>
<rect x="57" y="0" width="1.2" height="34" fill="#6f6a5e"/><rect x="56" y="0" width="1" height="34" fill="#c2ccc2"/>
<rect x="3.2" y="0.9" width="52" height="12.8" fill="#b4c6bd"/>
<g filter="url(#cb)">
<circle cx="29.3" cy="5.2" r="1.9" fill="#dfe6ea" stroke="#5a5a96" stroke-width="0.55"/>
<circle cx="29.3" cy="5.2" r="0.7" fill="#b04a5a"/>
<text x="29.3" y="11.2" text-anchor="middle" font-family="'Liberation Serif',serif" font-weight="bold" font-size="3.7" fill="#c8424a" textLength="48" lengthAdjust="spacingAndGlyphs">Maharashtra Medical Council, Mumbai</text>
<rect x="15.3" y="17.9" width="28" height="1" fill="#4a4e5a" opacity="0.8"/>
<rect x="4.2" y="20.9" width="19.5" height="0.9" fill="#4a4e52" opacity="0.85"/>
<rect x="4.2" y="24.4" width="18" height="0.7" fill="#8a908c" opacity="0.8"/>
<rect x="24.5" y="23.3" width="0.3" height="3.5" fill="#b5bdb8"/><rect x="43" y="23.3" width="0.3" height="3.5" fill="#b5bdb8"/>
<path d="M28.8 24.4 q1 -1 1.4 0.4 t1.6 0 t1.8 0.2 t1.6 -0.4" fill="none" stroke="#5a6ab8" stroke-width="0.5"/>
<rect x="4.2" y="29.7" width="21.5" height="0.9" fill="#4a4e52" opacity="0.85"/>
<rect x="4.2" y="32.6" width="39" height="0.9" fill="#4a4e52" opacity="0.75"/>
<rect x="44.8" y="17.4" width="8" height="10" fill="#e6ebe6"/>
<ellipse cx="48.7" cy="20.6" rx="2.1" ry="2.8" fill="#3a2e2a"/>
<ellipse cx="48.7" cy="20.4" rx="1.1" ry="1.5" fill="#c8a08c"/>
<path d="M45.4 27 Q45.4 23.6 48.7 23.4 Q52 23.6 52.2 27 Z" fill="#2a5aa8"/>
<path d="M46.3 21 Q46 24 46.6 25.4 L47.6 23 Z M51.1 21 Q51.4 24 50.8 25.4 L49.8 23 Z" fill="#2e2422"/>
</g>
</svg>
<svg class="abs" style="left:928px;top:405px;z-index:3" width="46" height="46" viewBox="928 405 46 46">
<defs>
<radialGradient id="rh" cx="0.62" cy="0.3" r="0.8"><stop offset="0" stop-color="#e2d2f4"/><stop offset="0.45" stop-color="#b494d8"/><stop offset="1" stop-color="#6e48a0"/></radialGradient>
<linearGradient id="rb" x1="0" y1="0" x2="1" y2="0"><stop offset="0" stop-color="#7a54a8"/><stop offset="0.45" stop-color="#d0b8ec"/><stop offset="1" stop-color="#6a4498"/></linearGradient>
<filter id="rs" x="-20%" y="-20%" width="140%" height="140%"><feGaussianBlur stdDeviation="0.9"/></filter>
<filter id="rsm" x="-20%" y="-20%" width="140%" height="140%"><feGaussianBlur stdDeviation="0.3"/></filter>
</defs>
<circle cx="951" cy="428.9" r="19.3" fill="#fff" opacity="0.95" filter="url(#rs)"/>
<path d="M957 443.8 L962 445.6 L961.6 440.6 Z" fill="#ee1212"/>
<circle cx="951" cy="427.6" r="18.8" fill="#ee1212"/>
<g filter="url(#rsm)">
<path d="M939.8 430.2 Q943.6 438 951 440 Q958.4 438 962.2 430.2 Q957.4 436 951 436.6 Q944.6 436 939.8 430.2 Z" fill="#fff"/>
<path d="M950 436.5 H952 L951.6 442.6 H950.4 Z" fill="#fff"/>
<path d="M944 424.5 H957.4 V433 Q956.6 436.6 951 438.6 Q945.2 436.6 944 433 Z" fill="url(#rb)"/>
<path d="M956 426 V433.5 Q957.6 432 957.6 429 Z" fill="#4a2c78"/>
<path d="M950.9 411 V414" stroke="#d8c8ec" stroke-width="0.7"/>
<circle cx="950.9" cy="411.4" r="0.9" fill="#e6d8f4"/>
<circle cx="950.8" cy="420.4" r="8.3" fill="url(#rh)"/>
<path d="M942.8 418.4 Q946 415.8 950.6 417.6 Q951.4 421 949.6 424.2 Q945.4 424.8 942.9 422.4 Q942.3 420.4 942.8 418.4 Z" fill="#1c1a6c"/>
<ellipse cx="944.6" cy="420.2" rx="1" ry="1.1" fill="#3f8cf4"/>
<ellipse cx="948.3" cy="421.6" rx="1.2" ry="1" fill="#3f8cf4"/>
</g>
</svg>
</body>
</html>
